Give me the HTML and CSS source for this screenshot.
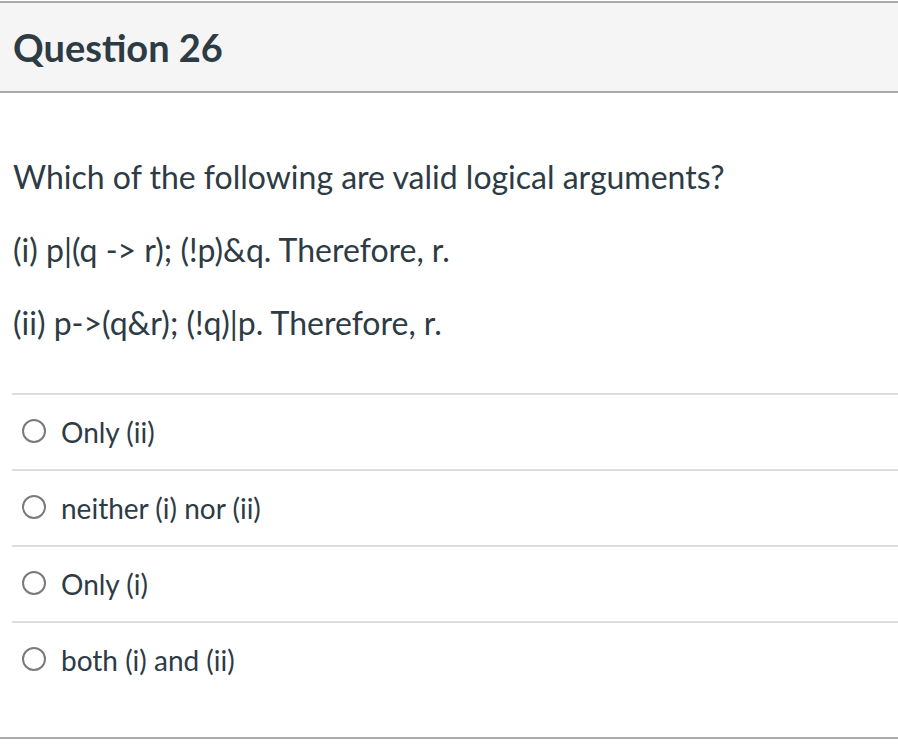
FILE: index.html
```html
<!DOCTYPE html>
<html lang="en">
<head>
<meta charset="utf-8">
<title>Question 26</title>
<link rel="stylesheet" href="styles.css">
</head>
<body>
<div class="question">
  <div class="header">
    <h2 class="title">Question 26</h2>
  </div>
  <div class="content">
    <div class="text">
      <p>Which of the following are valid logical arguments?</p>
      <p>(i) p|(q -&gt; r); (!p)&amp;q. Therefore, r.</p>
      <p>(ii) p-&gt;(q&amp;r); (!q)|p. Therefore, r.</p>
    </div>
    <ul class="answers">
      <li class="answer"><span class="radio"></span><span class="label">Only (ii)</span></li>
      <li class="answer"><span class="radio"></span><span class="label">neither (i) nor (ii)</span></li>
      <li class="answer"><span class="radio"></span><span class="label">Only (i)</span></li>
      <li class="answer"><span class="radio"></span><span class="label">both (i) and (ii)</span></li>
    </ul>
  </div>
</div>
</body>
</html>
```
FILE: styles.css
```css
html, body {
  margin: 0;
  padding: 0;
  background: #fff;
}
body {
  font-family: Lato, "Open Sans", sans-serif;
  color: #2d3b45;
  padding-top: 1px;
}
.question {
  border-top: 2px solid #aaaaaa;
  border-bottom: 2px solid #aaaaaa;
}
.header {
  background: #f5f5f5;
  border-bottom: 2px solid #aaaaaa;
  height: 88px;
  display: flex;
  align-items: center;
  padding-left: 13px;
}
.title {
  margin: 0;
  font-size: 38px;
  font-weight: 700;
}
.content {
  padding: 0 0 0 12px;
}
.text {
  padding-top: 64px;
  padding-bottom: 50px;
}
.text p {
  margin: 0;
  font-size: 32px;
  line-height: 40px;
  padding-left: 1px;
}
.text p + p {
  margin-top: 33px;
}
.answers {
  list-style: none;
  margin: 0;
  padding: 0 0 40px 0;
}
.answer {
  border-top: 2px solid #dddddd;
  height: 74px;
  display: flex;
  align-items: center;
  gap: 15px;
  padding-left: 10px;
}
.radio {
  width: 24px;
  height: 24px;
  border: 2px solid #7a7a7a;
  border-radius: 50%;
  box-sizing: border-box;
  margin-top: -2px;
}
.label {
  font-size: 28px;
}
```
